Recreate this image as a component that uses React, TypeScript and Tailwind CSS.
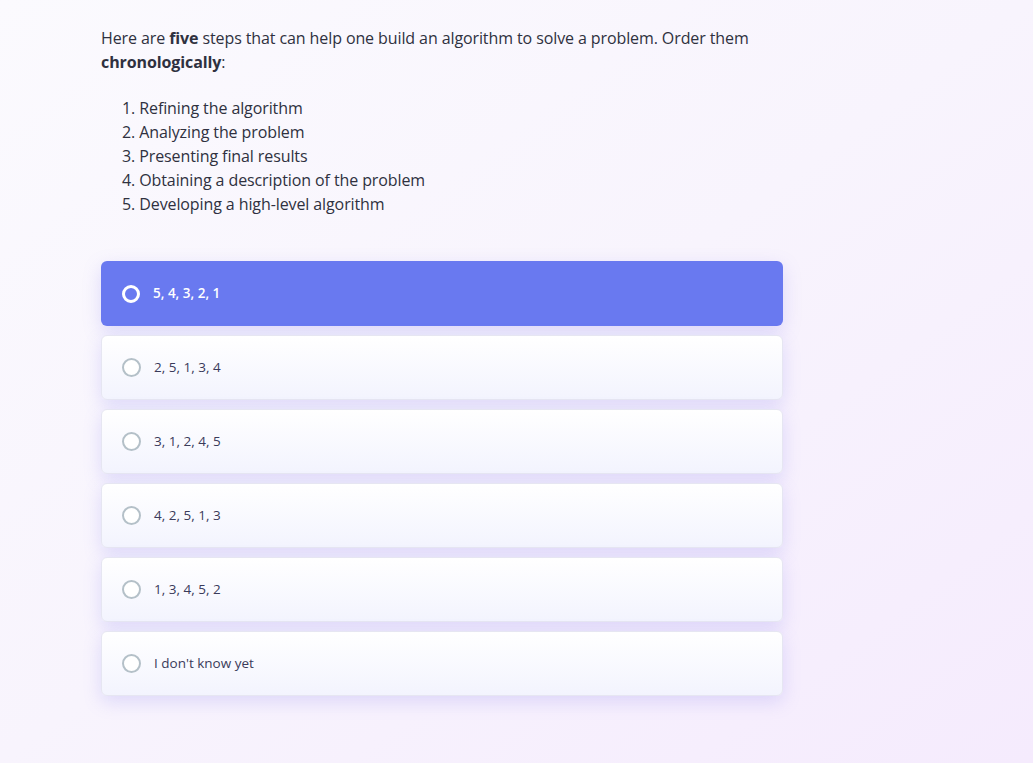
import React, { useState } from 'react';

const options = ['5, 4, 3, 2, 1', '2, 5, 1, 3, 4', '3, 1, 2, 4, 5', '4, 2, 5, 1, 3', '1, 3, 4, 5, 2', "I don't know yet"];

const steps = [
	'Refining the algorithm',
	'Analyzing the problem',
	'Presenting final results',
	'Obtaining a description of the problem',
	'Developing a high-level algorithm',
];

export default function App() {
	const [selected, setSelected] = useState(0);

	return (
		<div
			className="min-h-[763px] w-full bg-gradient-to-br from-[#fbfafe] via-[#f8f4fd] to-[#f5ebfd] text-[#2f3140]"
			style={{ fontFamily: '"Open Sans", "Noto Sans", sans-serif' }}
		>
			<div className="w-[682px] ml-[101px] pt-[26px] pb-[66px]">
				{/* Question */}
				<p className="text-[16px] leading-[24px] tracking-[-0.1px]">
					Here are <b className="font-bold">five</b> steps that can help one build an algorithm to solve a problem. Order them{' '}
					<b className="font-bold">chronologically</b>:
				</p>

				<ol className="mt-[22px] pl-[21px] text-[16px] leading-[24px] tracking-[-0.1px]">
					{steps.map((s, i) => (
						<li key={i}>
							{i + 1}. {s}
						</li>
					))}
				</ol>

				{/* Answers */}
				<div className="mt-[45px] flex flex-col gap-[9px]">
					{options.map((opt, i) => {
						const active = i === selected;
						return (
							<button
								key={i}
								onClick={() => setSelected(i)}
								className={
									active
										? 'flex h-[65px] items-center gap-[13px] rounded-md bg-[#6979f0] px-[21px] text-left text-[13.5px] font-semibold text-white shadow-[0_6px_18px_rgba(140,130,240,0.25)]'
										: 'flex h-[65px] items-center gap-[13px] rounded-md border border-[#e6e6f2] bg-gradient-to-b from-white to-[#f3f4fe] px-[20px] text-left text-[13.5px] text-[#3a3b5a] shadow-[0_6px_18px_rgba(140,130,240,0.24)]'
								}
							>
								<span
									className={
										active
											? 'h-[18px] w-[18px] rounded-full border-[3px] border-white'
											: 'h-[19px] w-[19px] rounded-full border-2 border-[#b4c0c8] bg-white'
									}
								/>
								<span>{opt}</span>
							</button>
						);
					})}
				</div>
			</div>
		</div>
	);
}
